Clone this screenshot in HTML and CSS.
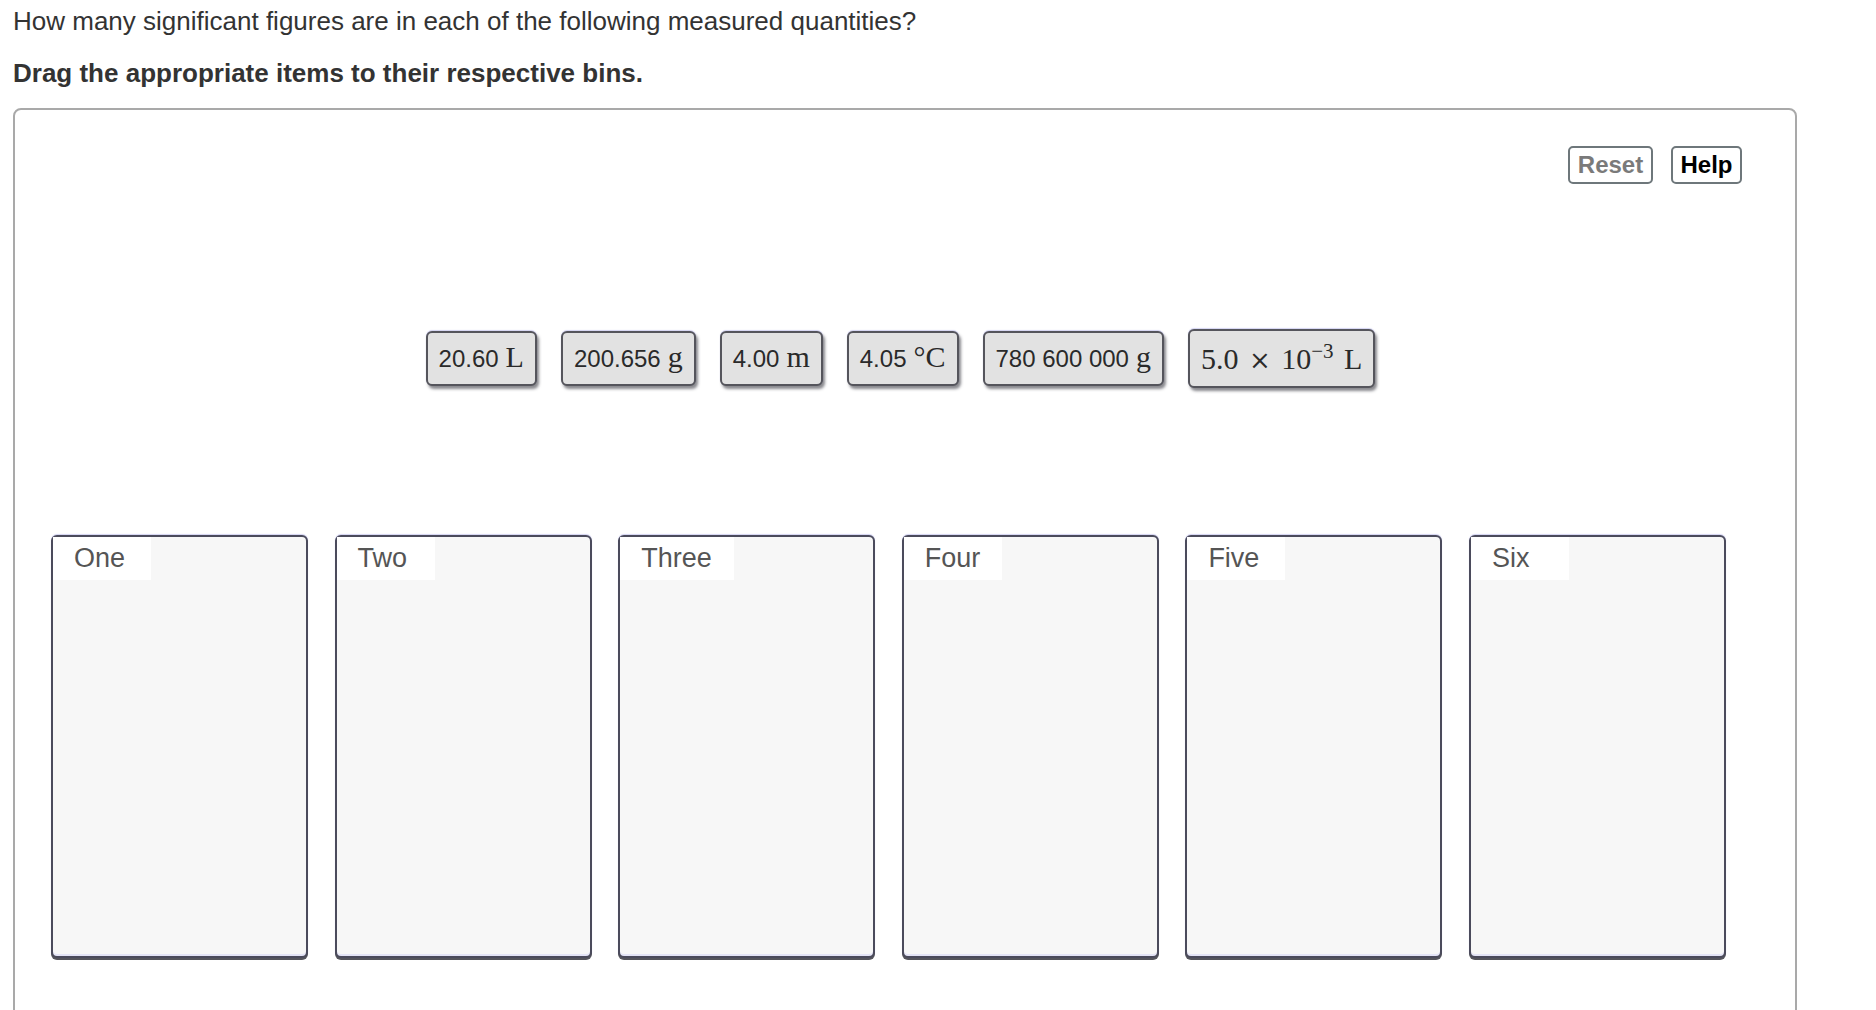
FILE: index.html
```html
<!DOCTYPE html>
<html>
<head>
<meta charset="utf-8">
<title>Significant figures</title>
<link rel="stylesheet" href="styles.css">
</head>
<body>
<p class="question">How many significant figures are in each of the following measured quantities?</p>
<p class="instruction">Drag the appropriate items to their respective bins.</p>
<div class="board">
  <div class="toolbar">
    <button class="btn btn-reset">Reset</button>
    <button class="btn btn-help">Help</button>
  </div>
  <div class="items">
    <div class="item"><span class="num">20.60</span><span class="unit">L</span></div>
    <div class="item"><span class="num">200.656</span><span class="unit">g</span></div>
    <div class="item"><span class="num">4.00</span><span class="unit">m</span></div>
    <div class="item"><span class="num">4.05</span><span class="unit">°C</span></div>
    <div class="item"><span class="num">780 600 000</span><span class="unit">g</span></div>
    <div class="item item-math"><span class="math">5.0 <span class="times">×</span> 10<sup>−3</sup> L</span></div>
  </div>
  <div class="bins">
    <div class="bin"><div class="bin-label">One</div></div>
    <div class="bin"><div class="bin-label">Two</div></div>
    <div class="bin"><div class="bin-label">Three</div></div>
    <div class="bin"><div class="bin-label">Four</div></div>
    <div class="bin"><div class="bin-label">Five</div></div>
    <div class="bin"><div class="bin-label">Six</div></div>
  </div>
</div>
</body>
</html>
```
FILE: styles.css
```css
html, body {
  margin: 0;
  padding: 0;
  background: #ffffff;
  overflow: hidden;
}
body {
  font-family: "Liberation Sans", Arial, Helvetica, sans-serif;
  color: #333333;
  padding: 0 13px;
}
.question {
  margin: 0;
  padding-top: 6px;
  font-size: 26px;
  line-height: 30px;
}
.instruction {
  margin: 22px 0 0 0;
  font-size: 26px;
  line-height: 30px;
  font-weight: bold;
}
.board {
  margin-top: 20px;
  width: 1784px;
  height: 920px;
  box-sizing: border-box;
  border: 2px solid #a9a9a9;
  border-radius: 8px;
  padding: 36px 53px 0 36px;
}
.toolbar {
  display: flex;
  justify-content: flex-end;
  gap: 18px;
}
.btn {
  font-family: "Liberation Sans", Arial, sans-serif;
  font-weight: bold;
  font-size: 24px;
  height: 38px;
  padding: 0 6px;
  background: #ffffff;
  border: 2px solid #6e777b;
  border-radius: 5px;
  line-height: 32px;
}
.btn-reset { color: #7a7a7a; width: 85px; }
.btn-help { color: #000000; width: 71px; }
.items {
  display: flex;
  justify-content: center;
  align-items: center;
  gap: 24px;
  margin-top: 145px;
  padding-left: 8px;
}
.item {
  display: flex;
  align-items: baseline;
  gap: 7px;
  height: 55px;
  box-sizing: border-box;
  padding: 0 11px;
  background: #e2e2e2;
  border: 2px solid #55555c;
  border-radius: 6px;
  box-shadow: 2px 3px 3px rgba(40, 40, 50, 0.55), 0 -1px 1px #d4d4f2;
  line-height: 47px;
  color: #2a2a2a;
}
.num {
  font-family: "Liberation Sans", Arial, sans-serif;
  font-size: 24px;
}
.unit {
  font-family: "Liberation Serif", "Times New Roman", serif;
  font-size: 30px;
}
.item-math {
  height: 59px;
  line-height: 55px;
}
.math {
  font-family: "Liberation Serif", "Times New Roman", serif;
  font-size: 30px;
  word-spacing: 3px;
}
.times {
  font-family: "DejaVu Serif", serif;
  font-size: 26px;
}
.math sup {
  font-size: 21px;
  vertical-align: 11px;
  line-height: 0;
}
.bins {
  display: grid;
  grid-template-columns: repeat(6, 257px);
  column-gap: 26.6px;
  margin-top: 147px;
}
.bin {
  height: 423px;
  box-sizing: border-box;
  background: #f7f7f7;
  border: 2px solid #4b4b5c;
  border-radius: 6px;
  box-shadow: 0 2px 0 #55555c, inset 0 -2px 0 #e4e4f6, 0 -1px 1px #d4d4f2;
}
.bin-label {
  display: inline-block;
  background: #ffffff;
  color: #555555;
  font-size: 27px;
  line-height: 43px;
  padding: 0 22px 0 21px;
  min-width: 55px;
}
```
